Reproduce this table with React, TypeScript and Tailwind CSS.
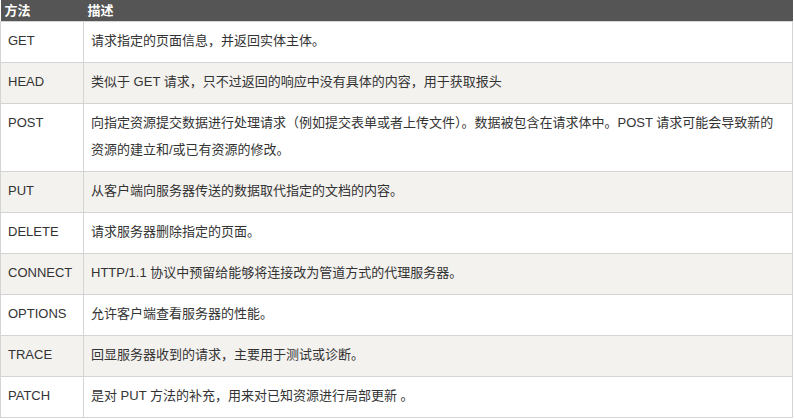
const rows: [string, string][] = [
  ["GET", "请求指定的页面信息，并返回实体主体。"],
  ["HEAD", "类似于 GET 请求，只不过返回的响应中没有具体的内容，用于获取报头"],
  [
    "POST",
    "向指定资源提交数据进行处理请求（例如提交表单或者上传文件）。数据被包含在请求体中。POST 请求可能会导致新的资源的建立和/或已有资源的修改。",
  ],
  ["PUT", "从客户端向服务器传送的数据取代指定的文档的内容。"],
  ["DELETE", "请求服务器删除指定的页面。"],
  ["CONNECT", "HTTP/1.1 协议中预留给能够将连接改为管道方式的代理服务器。"],
  ["OPTIONS", "允许客户端查看服务器的性能。"],
  ["TRACE", "回显服务器收到的请求，主要用于测试或诊断。"],
  ["PATCH", "是对 PUT 方法的补充，用来对已知资源进行局部更新 。"],
];

export default function App() {
  return (
    <div
      className="w-[794px] h-[419px] bg-white overflow-hidden text-[13px] text-[#333]"
      style={{ fontFamily: '"Liberation Sans", Arial, "Noto Sans CJK SC", sans-serif' }}
    >
      <table className="w-[793px] border-collapse table-fixed">
        <colgroup>
          <col className="w-[83px]" />
          <col />
        </colgroup>
        <thead>
          <tr className="bg-[#555555] text-white font-bold">
            <th className="h-[21px] px-[4px] py-0 text-left leading-[21px]">方法</th>
            <th className="h-[21px] px-[4px] py-0 text-left leading-[21px]">描述</th>
          </tr>
        </thead>
        <tbody>
          {rows.map(([m, d], i) => (
            <tr key={m} className={i % 2 === 1 ? "bg-[#f3f2ef]" : "bg-white"}>
              <td className="border border-[#d4d4d4] pl-[7px] pr-[6px] pt-[5px] pb-[8px] leading-[27px] align-top">
                {m}
              </td>
              <td className="border border-[#d4d4d4] pl-[7px] pr-[10px] pt-[5px] pb-[8px] leading-[27px] align-top">
                {d}
              </td>
            </tr>
          ))}
        </tbody>
      </table>
    </div>
  );
}
